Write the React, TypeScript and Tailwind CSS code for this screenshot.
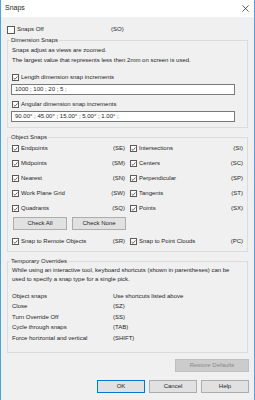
import React from "react";

const Check = ({ on = true, size = "w-[7px] h-[7px]" }: { on?: boolean; size?: string }) => (
  <span className={`${size} border border-[#5a5a5a] bg-white flex items-center justify-center shrink-0`}>
    {on && (
      <svg viewBox="0 0 6 6" className="w-[6px] h-[6px]">
        <path d="M0.8 3 L2.4 4.6 L5.3 1.1" fill="none" stroke="#1e1e1e" strokeWidth="0.8" />
      </svg>
    )}
  </span>
);

const Row = ({ label, code }: { label: string; code: string }) => (
  <div className="flex items-center h-[15px]">
    <Check />
    <span className="ml-[2px]">{label}</span>
    <span className="ml-auto">{code}</span>
  </div>
);

const snaps: [string, string, string, string][] = [
  ["Endpoints", "(SE)", "Intersections", "(SI)"],
  ["Midpoints", "(SM)", "Centers", "(SC)"],
  ["Nearest", "(SN)", "Perpendicular", "(SP)"],
  ["Work Plane Grid", "(SW)", "Tangents", "(ST)"],
  ["Quadrants", "(SQ)", "Points", "(SX)"],
];

const overrides = [
  ["Object snaps", "Use shortcuts listed above"],
  ["Close", "(SZ)"],
  ["Turn Override Off", "(SS)"],
  ["Cycle through snaps", "(TAB)"],
  ["Force horizontal and vertical", "(SHIFT)"],
];

const Btn = ({ children, className = "" }: { children: React.ReactNode; className?: string }) => (
  <div className={`h-[13px] flex items-center justify-center border ${className}`}>{children}</div>
);

export default function App() {
  return (
    <div className="w-[255px] h-[400px] overflow-hidden flex flex-col bg-[#f0f0f0] border-x border-[#4ea2e4] text-[6px] text-[#1e1e1e] font-['Liberation_Sans',Arial,sans-serif]">
      {/* title bar */}
      <div className="h-[17px] bg-white flex items-center justify-between pl-[4px] pr-[5px] shrink-0">
        <span className="text-[7px]">Snaps</span>
        <svg viewBox="0 0 8 8" className="w-[7px] h-[7px]">
          <path d="M0.5 0.5 L7.5 7.5 M7.5 0.5 L0.5 7.5" stroke="#333" strokeWidth="0.9" />
        </svg>
      </div>

      <div className="flex flex-col px-[6px]">
        {/* snaps off */}
        <div className="flex items-center h-[9px] mt-[8px]">
          <Check on={false} size="w-[8px] h-[8px]" />
          <span className="ml-[2px] w-[94px]">Snaps Off</span>
          <span>(SO)</span>
        </div>

        {/* dimension snaps */}
        <fieldset className="mt-[2px] border border-[#dcdcdc] px-[4px] pb-[5px]">
          <legend className="ml-[-2px] px-[1px] leading-[8px]">Dimension Snaps</legend>
          <div className="pt-[1px] leading-[10px]">
            <div>Snaps adjust as views are zoomed.</div>
            <div>The largest value that represents less then 2mm on screen is used.</div>
          </div>
          <div className="flex items-center h-[9px] mt-[8px]">
            <Check />
            <span className="ml-[2px]">Length dimension snap increments</span>
          </div>
          <div className="mt-[2px] h-[11px] w-[224px] ml-[-1px] bg-white border border-[#7a7a7a] flex items-center pl-[3px]">
            1000 ; 100 ; 20 ; 5 ;
          </div>
          <div className="flex items-center h-[9px] mt-[5px]">
            <Check />
            <span className="ml-[2px]">Angular dimension snap increments</span>
          </div>
          <div className="mt-[2px] h-[11px] w-[224px] ml-[-1px] bg-white border border-[#7a7a7a] flex items-center pl-[3px]">
            90.00° ; 45.00° ; 15.00° ; 5.00° ; 1.00° ;
          </div>
        </fieldset>

        {/* object snaps */}
        <fieldset className="mt-[5px] border border-[#dcdcdc] px-[4px] pb-[2px]">
          <legend className="ml-[-2px] px-[1px] leading-[8px]">Object Snaps</legend>
          <div className="grid grid-cols-2 gap-x-[5px]">
            {snaps.map(([a, ac, b, bc]) => (
              <React.Fragment key={a}>
                <Row label={a} code={ac} />
                <Row label={b} code={bc} />
              </React.Fragment>
            ))}
          </div>
          <div className="flex gap-[5px] mt-[1px] ml-[1px]">
            <Btn className="w-[54px] h-[12px] bg-[#e1e1e1] border-[#adadad]">Check All</Btn>
            <Btn className="w-[54px] h-[12px] bg-[#e1e1e1] border-[#adadad]">Check None</Btn>
          </div>
          <div className="grid grid-cols-2 gap-x-[5px] mt-[4px]">
            <Row label="Snap to Remote Objects" code="(SR)" />
            <Row label="Snap to Point Clouds" code="(PC)" />
          </div>
        </fieldset>

        {/* temporary overrides */}
        <fieldset className="mt-[5px] border border-[#dcdcdc] px-[4px] pb-[9px]">
          <legend className="ml-[-2px] px-[1px] leading-[8px]">Temporary Overrides</legend>
          <div className="pt-[1px] leading-[9px]">
            <div>While using an interactive tool, keyboard shortcuts (shown in parentheses) can be</div>
            <div>used to specify a snap type for a single pick.</div>
          </div>
          <div className="mt-[7px] leading-[10.4px]">
            {overrides.map(([k, v]) => (
              <div key={k} className="flex">
                <span className="w-[101px]">{k}</span>
                <span>{v}</span>
              </div>
            ))}
          </div>
        </fieldset>

        {/* footer */}
        <div className="flex justify-end mt-[6px] mr-[-1px]">
          <Btn className="w-[74px] bg-[#cccccc] border-[#bfbfbf] text-[#8a8a8a]">Restore Defaults</Btn>
        </div>
        <div className="flex justify-end gap-[4px] mt-[8px] mr-[-1px]">
          <Btn className="w-[48px] bg-[#e1e1e1] border-[#0078d7]">OK</Btn>
          <Btn className="w-[48px] bg-[#e1e1e1] border-[#adadad]">Cancel</Btn>
          <Btn className="w-[48px] bg-[#e1e1e1] border-[#adadad]">Help</Btn>
        </div>
      </div>
    </div>
  );
}
